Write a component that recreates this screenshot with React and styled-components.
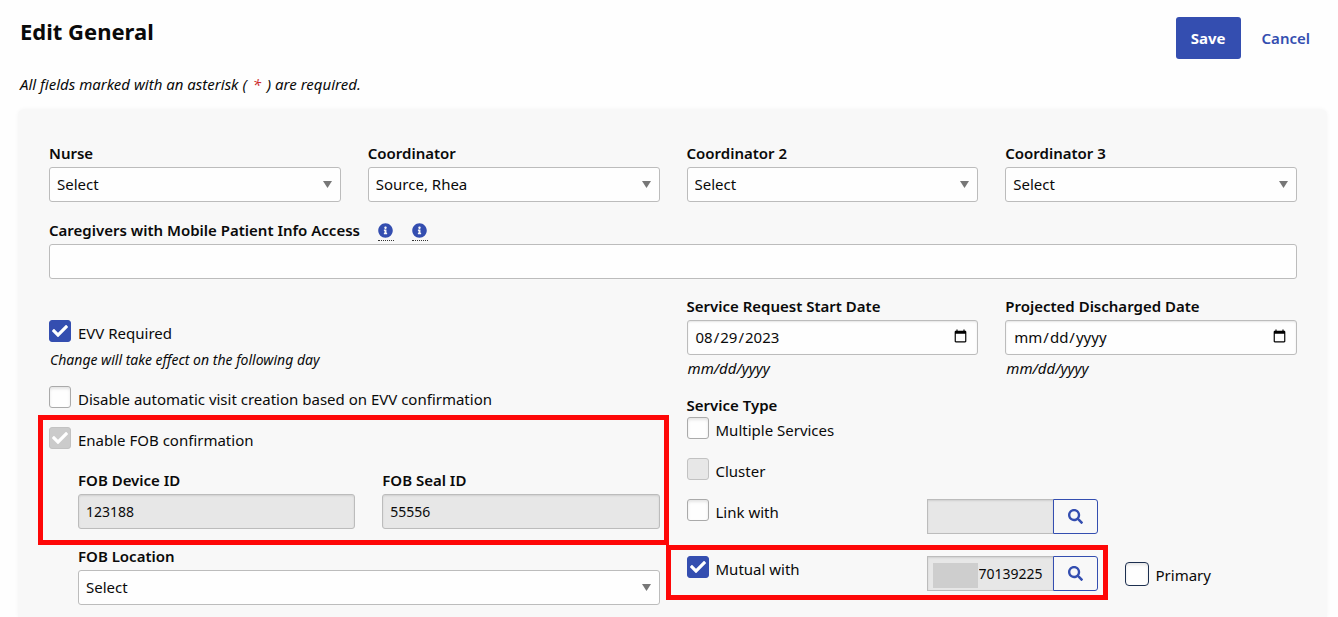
import React, { useState } from 'react'
import styled, { createGlobalStyle, css } from 'styled-components'
import { FaCheck, FaInfoCircle, FaSearch } from 'react-icons/fa'

const coordinators = ['Select', 'Source, Rhea']

function SelectField({ id, label, value, options = ['Select'] }) {
  return (
    <Field>
      <Label htmlFor={id}>{label}</Label>
      <SelectWrap>
        <Select id={id} defaultValue={value}>
          {options.map((option) => (
            <option key={option}>{option}</option>
          ))}
        </Select>
        <Arrow viewBox="0 0 9 7" aria-hidden="true">
          <path d="M0 0h9L4.5 7z" />
        </Arrow>
      </SelectWrap>
    </Field>
  )
}

function Check({ label, defaultChecked = false, disabled, focused }) {
  const [checked, setChecked] = useState(defaultChecked)
  return (
    <CheckLabel>
      <BoxWrap>
        <CheckInput
          type="checkbox"
          checked={checked}
          disabled={disabled}
          $focused={focused}
          onChange={(e) => setChecked(e.target.checked)}
        />
        {checked && <FaCheck aria-hidden="true" />}
      </BoxWrap>
      <span>{label}</span>
    </CheckLabel>
  )
}

function Lookup({ label, value, masked }) {
  return (
    <LookupGroup>
      <LookupInput type="text" aria-label={label} defaultValue={value} readOnly $masked={masked} />
      {masked && <Mask />}
      <LookupButton type="button" aria-label={`Search ${label}`}>
        <FaSearch />
      </LookupButton>
    </LookupGroup>
  )
}

function App() {
  return (
    <>
      <GlobalStyle />
      <Page>
        <Header>
          <Title>Edit General</Title>
          <Actions>
            <SaveButton type="submit">Save</SaveButton>
            <CancelLink href="#">Cancel</CancelLink>
          </Actions>
        </Header>
        <RequiredNote>
          All fields marked with an asterisk ( <Asterisk>*</Asterisk> ) are required.
        </RequiredNote>

        <Panel>
          <FourColumns>
            <SelectField id="nurse" label="Nurse" />
            <SelectField id="coord1" label="Coordinator" value="Source, Rhea" options={coordinators} />
            <SelectField id="coord2" label="Coordinator 2" options={coordinators} />
            <SelectField id="coord3" label="Coordinator 3" options={coordinators} />
          </FourColumns>

          <CaregiverField>
            <LabelRow>
              <Label htmlFor="caregivers">Caregivers with Mobile Patient Info Access</Label>
              <Info><FaInfoCircle /></Info>
              <Info><FaInfoCircle /></Info>
            </LabelRow>
            <Input id="caregivers" type="text" />
          </CaregiverField>

          <TwoColumns>
            <LeftColumn>
              <Check label="EVV Required" defaultChecked />
              <Hint>Change will take effect on the following day</Hint>
              <CheckRow $space={16}>
                <Check label="Disable automatic visit creation based on EVV confirmation" />
              </CheckRow>
              <FobHighlight>
                <CheckRow $space={15}>
                  <Check label="Enable FOB confirmation" defaultChecked disabled />
                </CheckRow>
                <FobFields>
                  <Field>
                    <Label htmlFor="fobDevice">FOB Device ID</Label>
                    <Input id="fobDevice" type="text" defaultValue="123188" readOnly />
                  </Field>
                  <Field>
                    <Label htmlFor="fobSeal">FOB Seal ID</Label>
                    <Input id="fobSeal" type="text" defaultValue="55556" readOnly />
                  </Field>
                </FobFields>
              </FobHighlight>
              <FobLocation>
                <SelectField id="fobLocation" label="FOB Location" />
              </FobLocation>
            </LeftColumn>

            <div>
              <DateColumns>
                <Field>
                  <Label htmlFor="startDate">Service Request Start Date</Label>
                  <DateInput id="startDate" type="date" defaultValue="2023-08-29" />
                  <DateHint>mm/dd/yyyy</DateHint>
                </Field>
                <Field>
                  <Label htmlFor="dischargeDate">Projected Discharged Date</Label>
                  <DateInput id="dischargeDate" type="date" />
                  <DateHint>mm/dd/yyyy</DateHint>
                </Field>
              </DateColumns>

              <ServiceType>
                <Legend>Service Type</Legend>
                <Check label="Multiple Services" />
                <CheckRow $space={15}>
                  <Check label="Cluster" disabled />
                </CheckRow>
                <CheckRow $space={15}>
                  <LinkedService>
                    <Check label="Link with" />
                    <Lookup label="Linked patient" />
                  </LinkedService>
                </CheckRow>
                <MutualRow>
                  <MutualHighlight>
                    <Check label="Mutual with" defaultChecked />
                    <Lookup label="Mutual patient" value="70139225" masked />
                  </MutualHighlight>
                  <Primary>
                    <Check label="Primary" focused />
                  </Primary>
                </MutualRow>
              </ServiceType>
            </div>
          </TwoColumns>
        </Panel>
      </Page>
    </>
  )
}

export default App

const GlobalStyle = createGlobalStyle`
  * {
    box-sizing: border-box;
  }
  body {
    margin: 0;
    background: #fefefe;
    color: #0a0a0a;
    font-family: "Noto Sans", "Open Sans", sans-serif;
    font-size: 15px;
    line-height: 20px;
  }
  input, select, button {
    font: inherit;
    color: inherit;
    margin: 0;
  }
`;

const Page = styled.form`
  display: flex;
  flex-direction: column;
  min-height: 100vh;
  padding: 17px 11px 0 18px;
`;

const Header = styled.header`
  display: flex;
  justify-content: space-between;
  align-items: flex-start;
  padding: 0 17px 0 2px;
`;

const Title = styled.h1`
  margin: 0;
  font-size: 22px;
  line-height: 28px;
  font-weight: 700;
`;

const Actions = styled.div`
  display: flex;
  align-items: center;
  gap: 21px;
`;

const SaveButton = styled.button`
  height: 42px;
  padding: 0 15px;
  border: none;
  border-radius: 3px;
  background: #344eb0;
  color: #fff;
  font-weight: 700;
  cursor: pointer;
`;

const CancelLink = styled.a`
  color: #344eb0;
  font-weight: 600;
  text-decoration: none;
`;

const RequiredNote = styled.p`
  margin: 15px 2px;
  font-style: italic;
`;

const Asterisk = styled.span`
  margin: 0 2px;
  color: #cc2b2b;
`;

const Panel = styled.section`
  flex: 1;
  padding: 34px 30px 0 31px;
  border-radius: 6px 6px 0 0;
  background: #f8f8f8;
  box-shadow: 0 0 4px rgba(0, 0, 0, 0.04);
`;

const FourColumns = styled.div`
  display: grid;
  grid-template-columns: repeat(4, 1fr);
  gap: 27px;
`;

const TwoColumns = styled.div`
  display: grid;
  grid-template-columns: repeat(2, 1fr);
  gap: 27px;
  margin-top: 17px;
`;

const DateColumns = styled.div`
  display: grid;
  grid-template-columns: repeat(2, 1fr);
  gap: 27px;
`;

const Field = styled.div`
  display: flex;
  flex-direction: column;
  min-width: 0;
`;

const CaregiverField = styled(Field)`
  margin-top: 18px;
`;

const Label = styled.label`
  margin-bottom: 4px;
  font-weight: 600;
`;

const LabelRow = styled.div`
  display: flex;
  align-items: flex-start;
  gap: 18px;
`;

const Info = styled.span`
  display: flex;
  width: 16px;
  height: 21px;
  padding-top: 3px;
  border-bottom: 1px dotted #333;
  color: #344eb0;
  font-size: 15px;
`;

const control = css`
  width: 100%;
  height: 35px;
  padding: 0 7px;
  border: 1px solid #bcbcbc;
  border-radius: 3px;
  background: #fefefe;
  outline: none;
`;

const Input = styled.input`
  ${control}

  &:read-only {
    background: #e7e7e7;
    box-shadow: inset 0 1px 2px rgba(10, 10, 10, 0.1);
    font-size: 14px;
  }
`;

const DateInput = styled.input`
  ${control}
  padding-bottom: 2px;
  box-shadow: inset 0 1px 2px rgba(10, 10, 10, 0.1);
`;

const SelectWrap = styled.div`
  position: relative;
`;

const Select = styled.select`
  ${control}
  padding-bottom: 2px;
  appearance: none;
`;

const Arrow = styled.svg`
  position: absolute;
  top: 14px;
  right: 9px;
  width: 9px;
  height: 7px;
  fill: #777;
  pointer-events: none;
`;

const CheckLabel = styled.label`
  display: flex;
  align-items: flex-start;
  gap: 7px;
  line-height: 26px;
`;

const BoxWrap = styled.span`
  position: relative;
  display: flex;
  color: #fff;

  svg {
    position: absolute;
    top: 3px;
    left: 3px;
    width: 16px;
    height: 16px;
    pointer-events: none;
  }
`;

const CheckInput = styled.input`
  appearance: none;
  width: 22px;
  height: 22px;
  border: 1px solid #aaa;
  border-radius: 3px;
  background: #fefefe;
  box-shadow: inset 0 2px 3px rgba(10, 10, 10, 0.1);

  &:checked {
    border-color: #344eb0;
    background: #344eb0;
    box-shadow: none;
  }
  &:disabled {
    border-color: #c2c2c2;
    background: #e7e7e7;
    box-shadow: none;
  }
  &:disabled:checked {
    background: #cbcbcb;
  }
  ${({ $focused }) => $focused && css`
    width: 24px;
    height: 24px;
    border-color: #1c2f4f;
    border-radius: 4px;
  `}
`;

const CheckRow = styled.div`
  margin-top: ${({ $space }) => $space}px;
`;

const Hint = styled.span`
  margin: 4px 1px 0;
  font-size: 14px;
  font-style: italic;
`;

const DateHint = styled(Hint)`
  margin-top: 3px;
  font-size: 15px;
`;

const LeftColumn = styled.div`
  display: flex;
  flex-direction: column;
  padding-top: 24px;
`;

/* red frame drawn over the content around it */
const frame = css`
  position: relative;

  &::after {
    content: '';
    position: absolute;
    z-index: 1;
    border: 5px solid #fe0808;
    pointer-events: none;
  }
`;

const FobHighlight = styled.div`
  ${frame}

  &::after {
    inset: 3px -9px -16px -11px;
  }
`;

const FobFields = styled.div`
  display: grid;
  grid-template-columns: repeat(2, 1fr);
  gap: 27px;
  padding: 17px 0 0 29px;
`;

const FobLocation = styled.div`
  padding: 17px 0 0 29px;
`;

const ServiceType = styled.fieldset`
  min-width: 0;
  margin: 17px 0 0;
  padding: 0;
  border: none;
`;

const Legend = styled.legend`
  padding: 0 0 2px;
  font-weight: 600;
`;

const LinkedService = styled.div`
  display: grid;
  grid-template-columns: 240px 171px;
`;

const MutualRow = styled.div`
  display: flex;
  gap: 27px;
  margin-top: 22px;
`;

const MutualHighlight = styled(LinkedService)`
  ${frame}

  &::after {
    inset: -11px -10px -9px -21px;
  }
`;

const Primary = styled.div`
  padding-top: 6px;
`;

const LookupGroup = styled.div`
  position: relative;
  display: flex;
`;

const LookupInput = styled.input`
  ${control}
  flex: 1;
  min-width: 0;
  padding-left: ${({ $masked }) => ($masked ? 51 : 7)}px;
  border-right: none;
  border-radius: 0;
  background: #e7e7e7;
  box-shadow: inset 0 1px 2px rgba(10, 10, 10, 0.1);
  font-size: 14px;
`;

const Mask = styled.span`
  position: absolute;
  top: 7px;
  left: 6px;
  width: 45px;
  height: 25px;
  background: #cecece;
`;

const LookupButton = styled.button`
  display: flex;
  align-items: center;
  justify-content: center;
  width: 45px;
  padding: 0;
  border: 1px solid #344eb0;
  border-radius: 0 3px 3px 0;
  background: transparent;
  color: #344eb0;
  cursor: pointer;
`;
